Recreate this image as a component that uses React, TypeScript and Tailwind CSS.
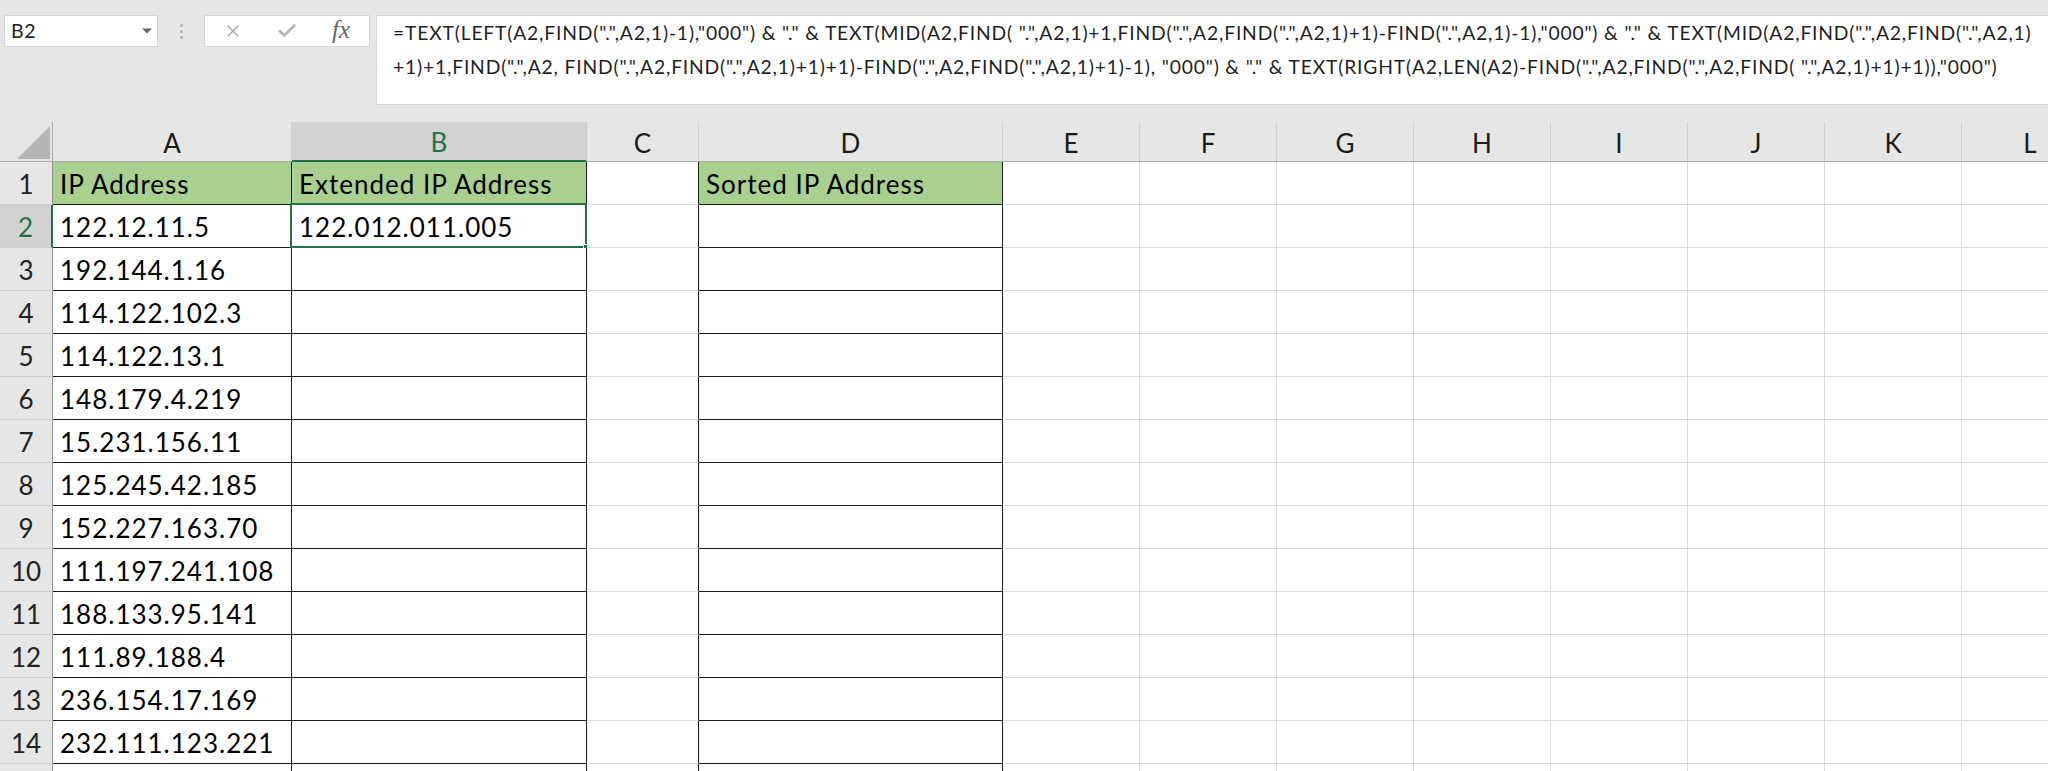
import { X, Check } from "lucide-react";

const font = "font-['Lato',sans-serif]";

// column layout taken from the sheet: width class + whether the cells are boxed in black
const columns = [
  { key: "A", w: "w-[239px]", boxed: true },
  { key: "B", w: "w-[295px]", boxed: true },
  { key: "C", w: "w-[112px]", boxed: false },
  { key: "D", w: "w-[304px]", boxed: true },
  { key: "E", w: "w-[137px]", boxed: false },
  { key: "F", w: "w-[137px]", boxed: false },
  { key: "G", w: "w-[137px]", boxed: false },
  { key: "H", w: "w-[137px]", boxed: false },
  { key: "I", w: "w-[137px]", boxed: false },
  { key: "J", w: "w-[137px]", boxed: false },
  { key: "K", w: "w-[137px]", boxed: false },
  { key: "L", w: "w-[137px]", boxed: false },
];

const ips = [
  "122.12.11.5",
  "192.144.1.16",
  "114.122.102.3",
  "114.122.13.1",
  "148.179.4.219",
  "15.231.156.11",
  "125.245.42.185",
  "152.227.163.70",
  "111.197.241.108",
  "188.133.95.141",
  "111.89.188.4",
  "236.154.17.169",
  "232.111.123.221",
];

const headerRow: Record<string, string> = {
  A: "IP Address",
  B: "Extended IP Address",
  D: "Sorted IP Address",
};

const formulaLine1 =
  '=TEXT(LEFT(A2,FIND(".",A2,1)-1),"000") & "." & TEXT(MID(A2,FIND( ".",A2,1)+1,FIND(".",A2,FIND(".",A2,1)+1)-FIND(".",A2,1)-1),"000") & "." & TEXT(MID(A2,FIND(".",A2,FIND(".",A2,1)';
const formulaLine2 =
  '+1)+1,FIND(".",A2, FIND(".",A2,FIND(".",A2,1)+1)+1)-FIND(".",A2,FIND(".",A2,1)+1)-1), "000") & "." & TEXT(RIGHT(A2,LEN(A2)-FIND(".",A2,FIND(".",A2,FIND( ".",A2,1)+1)+1)),"000")';

const cellValue = (col: string, row: number) => {
  if (row === 1) return headerRow[col] ?? "";
  if (col === "A") return ips[row - 2] ?? "";
  if (col === "B" && row === 2) return "122.012.011.005";
  return "";
};

const FormulaBar = () => (
  <div className="flex items-start h-[122px] bg-[#e6e6e6] pt-[15px] pl-[4px]">
    {/* Name box */}
    <div className="w-[154px] h-[32px] bg-white border border-[#d6d6d6] flex items-center justify-between pl-[6px] pr-[3px]">
      <span className="text-[19.5px] tracking-[0.6px] leading-none text-[#222] tabular-nums">B2</span>
      <svg width="12" height="6" viewBox="0 0 12 6" className="mr-[1px]">
        <path d="M1 0.5 L11 0.5 L6 5.5 Z" fill="#6b6b6b" />
      </svg>
    </div>

    {/* grip dots */}
    <div className="w-[46px] h-[32px] flex flex-col items-center justify-center gap-[3px]">
      <span className="w-[3px] h-[3px] rounded-full bg-[#b3b3b3]" />
      <span className="w-[3px] h-[3px] rounded-full bg-[#b3b3b3]" />
      <span className="w-[3px] h-[3px] rounded-full bg-[#b3b3b3]" />
    </div>

    {/* cancel / enter / function */}
    <div className="w-[166px] h-[32px] bg-white border border-[#d6d6d6] flex items-center pl-[18px]">
      <X className="w-[20px] h-[20px] text-[#a8a8a8]" strokeWidth={1.6} />
      <Check className="w-[22px] h-[22px] text-[#b7b7b7] ml-[33px]" strokeWidth={3} />
      <span className="ml-[34px] font-['Liberation_Serif',serif] italic text-[25px] leading-none text-[#666] -mt-[4px]">
        fx
      </span>
    </div>

    {/* formula text */}
    <div className="ml-[6px] flex-1 h-[90px] bg-white border border-[#d6d6d6] border-r-0 pl-[16px] text-[19.3px] tracking-[0.82px] leading-[34px] text-[#1f1f1f] whitespace-nowrap overflow-hidden">
      <div>{formulaLine1}</div>
      <div>{formulaLine2}</div>
    </div>
  </div>
);

const ColumnHeaders = () => (
  <div className="flex h-[40px] bg-[#e6e6e6]">
    <div className="w-[53px] shrink-0 border-r border-b border-[#ababab] flex items-end">
      <svg width="52" height="39" viewBox="0 0 52 39">
        <path d="M17 37 L50 37 L50 4 Z" fill="#b5b5b5" />
      </svg>
    </div>
    {columns.map((c) =>
      c.key === "B" ? (
        <div
          key={c.key}
          className={`${c.w} shrink-0 flex items-center justify-center bg-[#d2d2d2] border-r border-r-[#c6c6c6] border-b-2 border-b-[#217346] text-[26px] leading-none text-[#217346] pt-[2px]`}
        >
          {c.key}
        </div>
      ) : (
        <div
          key={c.key}
          className={`${c.w} shrink-0 flex items-center justify-center border-r border-r-[#d0d0d0] border-b border-b-[#ababab] text-[26px] leading-none text-[#1a1a1a] pt-[2px]`}
        >
          {c.key}
        </div>
      )
    )}
  </div>
);

const Row = ({ row, label }: { row: number; label: boolean }) => {
  const selected = row === 2;
  return (
    <div className="flex h-[43px]">
      <div
        className={`w-[53px] shrink-0 flex items-end justify-center pb-[7px] text-[26px] leading-none tabular-nums border-b border-b-[#d0d0d0] ${
          selected
            ? "bg-[#d2d2d2] text-[#217346] border-r-2 border-r-[#217346]"
            : "bg-[#e6e6e6] text-[#222] border-r border-r-[#8f8f8f]"
        }`}
      >
        {label ? row : ""}
      </div>
      {columns.map((c) => {
        const boxed = c.boxed;
        const rightBlack = boxed || c.key === "C";
        const fill = row === 1 && boxed ? "bg-[#a9d08e]" : "bg-white";
        const value = cellValue(c.key, row);
        return (
          <div
            key={c.key}
            className={`${c.w} shrink-0 relative flex items-end pl-[7px] pb-[7px] text-[26px] tracking-[1px] tabular-nums leading-none text-black whitespace-nowrap ${fill} border-r border-b ${
              rightBlack ? "border-r-[#1a1a1a]" : "border-r-[#dadada]"
            } ${boxed ? "border-b-[#1a1a1a]" : "border-b-[#dadada]"}`}
          >
            {value}
            {selected && c.key === "B" && (
              <>
                <div className="absolute -left-[2px] -top-[2px] -right-[1px] -bottom-[1px] border-2 border-[#217346] pointer-events-none" />
                <div className="absolute -right-[5px] -bottom-[5px] w-[8px] h-[8px] bg-[#217346] border border-white" />
              </>
            )}
          </div>
        );
      })}
    </div>
  );
};

export default function App() {
  const rows = Array.from({ length: 15 }, (_, i) => i + 1);
  return (
    <div className={`w-[2048px] h-[771px] overflow-hidden bg-white ${font}`}>
      <FormulaBar />
      <ColumnHeaders />
      <div>
        {rows.map((r) => (
          // row 15 only peeks in at the bottom edge, its number is out of view
          <Row key={r} row={r} label={r < 15} />
        ))}
      </div>
    </div>
  );
}
